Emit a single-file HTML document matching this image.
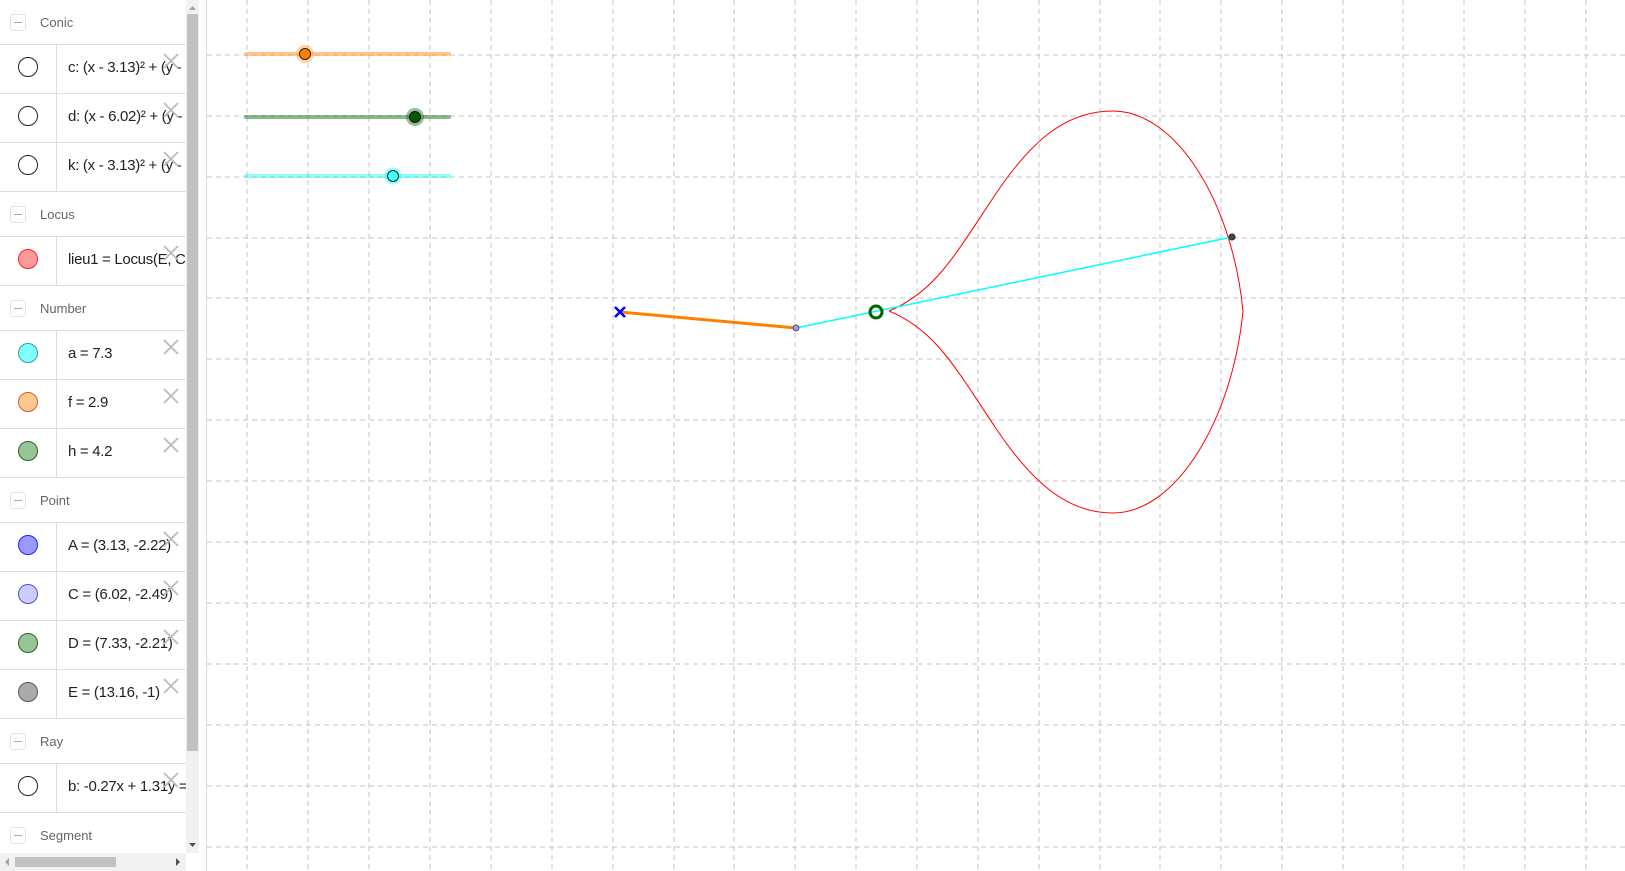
<!DOCTYPE html>
<html><head><meta charset="utf-8"><style>
*{margin:0;padding:0;box-sizing:border-box}
body{width:1625px;height:871px;overflow:hidden;background:#fff;font-family:"Liberation Sans",sans-serif;position:relative}
#panel{position:absolute;left:0;top:0;width:186px;height:853px;overflow:hidden;background:#fff}
.hdr{position:absolute;left:0;width:186px;height:45px;border-bottom:1px solid #ddd}
.hdr .box{position:absolute;left:10px;top:14px;width:16px;height:17px;border:1px solid #e4e4e4;border-radius:3px}
.hdr .box:after{content:"";position:absolute;left:3px;top:7px;width:8px;height:1px;background:#aaa}
.hdr span{position:absolute;left:40px;top:15px;font-size:13px;color:#666}
.row{position:absolute;left:0;width:186px;height:49px;border-bottom:1px solid #ddd}
.row .ic{position:absolute;left:18px;top:12px;width:20px;height:20px;border-radius:50%;border:1px solid #222}
.row .sep{position:absolute;left:56px;top:0;width:1px;height:48px;background:#ddd}
.row .t{position:absolute;left:68px;top:14px;font-size:15px;color:#222;white-space:nowrap;font-family:"Liberation Sans","DejaVu Sans",sans-serif;letter-spacing:-0.3px}
.row .x{position:absolute;left:161px;top:6px;width:20px;height:20px}
</style></head><body>
<svg width="1625" height="871" style="position:absolute;left:0;top:0">
<g stroke="#c4c4c4" stroke-width="1" stroke-dasharray="5,4">
<line x1="247" y1="0" x2="247" y2="871"/><line x1="308" y1="0" x2="308" y2="871"/><line x1="369" y1="0" x2="369" y2="871"/><line x1="430" y1="0" x2="430" y2="871"/><line x1="491" y1="0" x2="491" y2="871"/><line x1="552" y1="0" x2="552" y2="871"/><line x1="613" y1="0" x2="613" y2="871"/><line x1="674" y1="0" x2="674" y2="871"/><line x1="734" y1="0" x2="734" y2="871"/><line x1="795" y1="0" x2="795" y2="871"/><line x1="856" y1="0" x2="856" y2="871"/><line x1="917" y1="0" x2="917" y2="871"/><line x1="978" y1="0" x2="978" y2="871"/><line x1="1039" y1="0" x2="1039" y2="871"/><line x1="1100" y1="0" x2="1100" y2="871"/><line x1="1160" y1="0" x2="1160" y2="871"/><line x1="1221" y1="0" x2="1221" y2="871"/><line x1="1282" y1="0" x2="1282" y2="871"/><line x1="1343" y1="0" x2="1343" y2="871"/><line x1="1403" y1="0" x2="1403" y2="871"/><line x1="1464" y1="0" x2="1464" y2="871"/><line x1="1525" y1="0" x2="1525" y2="871"/><line x1="1586" y1="0" x2="1586" y2="871"/>
<line x1="207" y1="55" x2="1625" y2="55"/><line x1="207" y1="116" x2="1625" y2="116"/><line x1="207" y1="177" x2="1625" y2="177"/><line x1="207" y1="238" x2="1625" y2="238"/><line x1="207" y1="298" x2="1625" y2="298"/><line x1="207" y1="359" x2="1625" y2="359"/><line x1="207" y1="420" x2="1625" y2="420"/><line x1="207" y1="481" x2="1625" y2="481"/><line x1="207" y1="542" x2="1625" y2="542"/><line x1="207" y1="603" x2="1625" y2="603"/><line x1="207" y1="664" x2="1625" y2="664"/><line x1="207" y1="725" x2="1625" y2="725"/><line x1="207" y1="786" x2="1625" y2="786"/><line x1="207" y1="847" x2="1625" y2="847"/>
</g>
<line x1="206.5" y1="0" x2="206.5" y2="871" stroke="#d8d8d8"/>
<line x1="246" y1="54" x2="449" y2="54" stroke="#ffa040" stroke-opacity=".6" stroke-width="4" stroke-linecap="round"/>
<circle cx="305" cy="54" r="9" fill="#ffa040" fill-opacity=".45"/><circle cx="305" cy="54" r="5.5" fill="#ff8000" stroke="#222" stroke-width="1"/>
<line x1="246" y1="117" x2="449" y2="117" stroke="#2e7d32" stroke-opacity=".55" stroke-width="4" stroke-linecap="round"/>
<circle cx="415" cy="117" r="9" fill="#2e7d32" fill-opacity=".5"/><circle cx="415" cy="117" r="5.5" fill="#005a00" stroke="#111" stroke-width="1"/>
<line x1="246" y1="176" x2="449" y2="176" stroke="#00ffff" stroke-opacity=".45" stroke-width="4" stroke-linecap="round"/>
<circle cx="393" cy="176" r="8.5" fill="#00ffff" fill-opacity=".4"/><circle cx="393" cy="176" r="5.5" fill="#40ffff" stroke="#222" stroke-width="1"/>
<path d="M889,311 C935,292 955,255 995,195 C1035,135 1070,111 1113,111 C1175,111 1232,200 1243,311 C1232,422 1175,513 1113,513 C1070,513 1035,487 995,427 C955,367 935,330 889,311" fill="none" stroke="#ff0000" stroke-width="1"/>
<line x1="620" y1="312" x2="796" y2="328" stroke="#ff8000" stroke-width="3"/>
<line x1="796" y1="328" x2="1232" y2="237" stroke="#00ffff" stroke-width="1.5"/>
<circle cx="796" cy="328" r="3" fill="#9999ff" stroke="#333" stroke-width=".7"/>
<circle cx="1232" cy="237" r="3.2" fill="#444" stroke="#222" stroke-width=".7"/>
<circle cx="876" cy="312" r="6" fill="none" stroke="#006400" stroke-width="3"/>
<path d="M615,307 L625,317 M625,307 L615,317" stroke="#0000ff" stroke-width="2.5"/>
<rect x="186" y="0" width="13" height="853" fill="#f1f1f1"/>
<rect x="187" y="14" width="11" height="737" fill="#c1c1c1"/>
<path d="M189,10 L192.5,6 L196,10Z" fill="#a3a3a3"/>
<path d="M189,843 L192.5,847 L196,843Z" fill="#505050"/>
<rect x="0" y="853" width="186" height="18" fill="#f1f1f1"/>
<rect x="15" y="857" width="101" height="10" fill="#c1c1c1"/>
<path d="M9,858 L5,862 L9,866Z" fill="#a3a3a3"/>
<path d="M176,858 L180,862 L176,866Z" fill="#505050"/>
</svg>
<div id="panel">
<div class="hdr" style="top:0"><div class="box"></div><span>Conic</span></div>
<div class="row" style="top:45px"><div class="ic"></div><div class="sep"></div><div class="t">c: (x - 3.13)² + (y - </div><svg class="x"><path d="M3,3L17,17M17,3L3,17" stroke="#bbb" stroke-width="1.8"/></svg></div>
<div class="row" style="top:94px"><div class="ic"></div><div class="sep"></div><div class="t">d: (x - 6.02)² + (y - </div><svg class="x"><path d="M3,3L17,17M17,3L3,17" stroke="#bbb" stroke-width="1.8"/></svg></div>
<div class="row" style="top:143px"><div class="ic"></div><div class="sep"></div><div class="t">k: (x - 3.13)² + (y - </div><svg class="x"><path d="M3,3L17,17M17,3L3,17" stroke="#bbb" stroke-width="1.8"/></svg></div>
<div class="hdr" style="top:192px"><div class="box"></div><span>Locus</span></div>
<div class="row" style="top:237px"><div class="ic" style="background:#ff9999;border-color:#ff2020"></div><div class="sep"></div><div class="t">lieu1 = Locus(E, C)</div><svg class="x"><path d="M3,3L17,17M17,3L3,17" stroke="#bbb" stroke-width="1.8"/></svg></div>
<div class="hdr" style="top:286px"><div class="box"></div><span>Number</span></div>
<div class="row" style="top:331px"><div class="ic" style="background:#80ffff;border-color:#30a0a0"></div><div class="sep"></div><div class="t">a = 7.3</div><svg class="x"><path d="M3,3L17,17M17,3L3,17" stroke="#bbb" stroke-width="1.8"/></svg></div>
<div class="row" style="top:380px"><div class="ic" style="background:#ffc890;border-color:#d06020"></div><div class="sep"></div><div class="t">f = 2.9</div><svg class="x"><path d="M3,3L17,17M17,3L3,17" stroke="#bbb" stroke-width="1.8"/></svg></div>
<div class="row" style="top:429px"><div class="ic" style="background:#99c499;border-color:#1e6a1e"></div><div class="sep"></div><div class="t">h = 4.2</div><svg class="x"><path d="M3,3L17,17M17,3L3,17" stroke="#bbb" stroke-width="1.8"/></svg></div>
<div class="hdr" style="top:478px"><div class="box"></div><span>Point</span></div>
<div class="row" style="top:523px"><div class="ic" style="background:#9999ff;border-color:#2020ff"></div><div class="sep"></div><div class="t">A = (3.13, -2.22)</div><svg class="x"><path d="M3,3L17,17M17,3L3,17" stroke="#bbb" stroke-width="1.8"/></svg></div>
<div class="row" style="top:572px"><div class="ic" style="background:#ccccff;border-color:#5050d0"></div><div class="sep"></div><div class="t">C = (6.02, -2.49)</div><svg class="x"><path d="M3,3L17,17M17,3L3,17" stroke="#bbb" stroke-width="1.8"/></svg></div>
<div class="row" style="top:621px"><div class="ic" style="background:#99c499;border-color:#1e6a1e"></div><div class="sep"></div><div class="t">D = (7.33, -2.21)</div><svg class="x"><path d="M3,3L17,17M17,3L3,17" stroke="#bbb" stroke-width="1.8"/></svg></div>
<div class="row" style="top:670px"><div class="ic" style="background:#aaa;border-color:#555"></div><div class="sep"></div><div class="t">E = (13.16, -1)</div><svg class="x"><path d="M3,3L17,17M17,3L3,17" stroke="#bbb" stroke-width="1.8"/></svg></div>
<div class="hdr" style="top:719px"><div class="box"></div><span>Ray</span></div>
<div class="row" style="top:764px"><div class="ic"></div><div class="sep"></div><div class="t">b: -0.27x + 1.31y = </div><svg class="x"><path d="M3,3L17,17M17,3L3,17" stroke="#bbb" stroke-width="1.8"/></svg></div>
<div class="hdr" style="top:813px;border-bottom:none"><div class="box"></div><span>Segment</span></div>
</div>
</body></html>
